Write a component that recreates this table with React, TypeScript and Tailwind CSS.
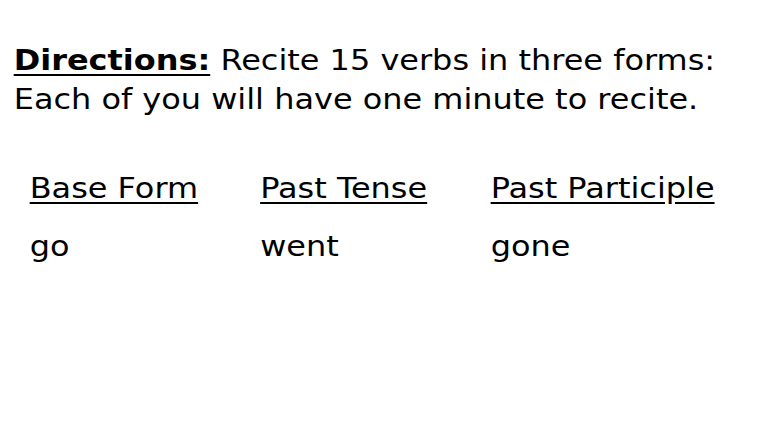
const verbs = [["go", "went", "gone"]]

const App = () => {
    return (
        <div className="w-[768px] h-[433px] bg-white text-black overflow-hidden" style={{ fontFamily: '"DejaVu Sans", sans-serif' }}>
            {/* the slide is stretched wider than the font, so scale it out horizontally */}
            <div className="w-[673px] origin-top-left scale-x-[1.141]">
                <div className="pt-[41px] pl-[12px] text-[28px] leading-[39px]">
                    <p>
                        <span className="font-bold underline underline-offset-[4px]">Directions:</span> Recite 15 verbs in three forms:
                    </p>
                    <p>Each of you will have one minute to recite.</p>
                </div>
                <div className="mt-[49px] pl-[26px] text-[28px]">
                    <div className="flex">
                        <span className="w-[202px] underline underline-offset-[4px]">Base Form</span>
                        <span className="w-[202px] underline underline-offset-[4px]">Past Tense</span>
                        <span className="underline underline-offset-[4px]">Past Participle</span>
                    </div>
                    {verbs.map((row) => (
                        <div key={row[0]} className="flex mt-[16px]">
                            <span className="w-[202px]">{row[0]}</span>
                            <span className="w-[202px]">{row[1]}</span>
                            <span>{row[2]}</span>
                        </div>
                    ))}
                </div>
            </div>
        </div>
    )
}

export default App
